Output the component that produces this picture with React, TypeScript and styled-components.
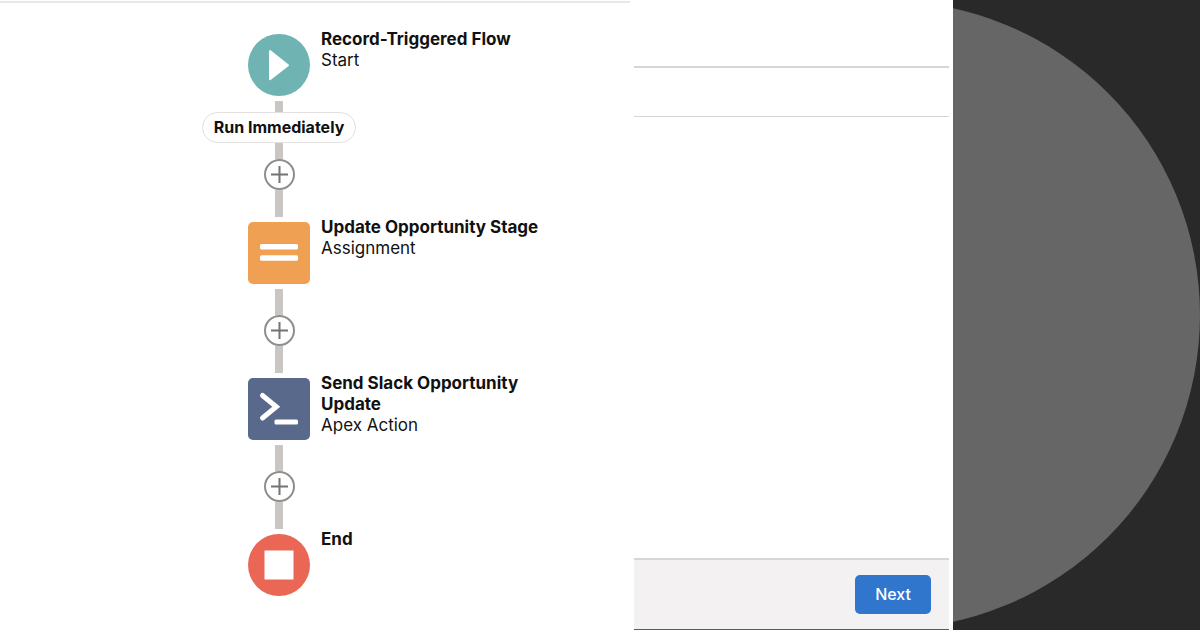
import React from "react";
import styled, { createGlobalStyle } from "styled-components";

const GlobalStyle = createGlobalStyle`
  *, *::before, *::after { box-sizing: border-box; }
  body {
    margin: 0;
    background: #fff;
    color: #111;
    font-family: Inter, "Liberation Sans", sans-serif;
    font-size: 17px;
    line-height: 21px;
  }
`;

const Page = styled.main`
  display: grid;
  grid-template-columns: 630fr 315fr 247fr;
  column-gap: 4px;
  min-height: 100vh;
`;

const FlowPanel = styled.section`
  margin-top: 1px;
  padding: 26px 24px 24px 248px;
  border-top: 2px solid #e8e8e8;
`;

const FlowList = styled.ol`
  list-style: none;
  margin: 0;
  padding: 0;
`;

const Node = styled.div`
  display: flex;
  gap: 11px;
`;

const NodeIcon = styled.svg`
  flex: none;
  width: 62px;
  height: 62px;
  margin: 5px 0;
`;

const NodeText = styled.div`
  max-width: 232px;
`;

const NodeTitle = styled.h2`
  margin: 0;
  font-size: 17px;
  font-weight: 700;
`;

const NodeType = styled.p`
  margin: 0;
  font-size: 17px;
`;

const Connector = styled.div`
  display: flex;
  flex-direction: column;
  align-items: center;
  width: 62px;
`;

const Line = styled.span<{ $length: number }>`
  width: 8px;
  height: ${(p) => p.$length}px;
  background: #c9c6c4;
`;

const PathLabel = styled.span`
  height: 31px;
  padding: 0 11px;
  border: 1px solid #e2e1e0;
  border-radius: 16px;
  background: #fff;
  font-size: 16px;
  font-weight: 700;
  line-height: 29px;
  white-space: nowrap;
`;

const AddButton = styled.button`
  display: block;
  width: 31px;
  height: 31px;
  padding: 0;
  border: 0;
  border-radius: 50%;
  background: #fff;
  cursor: pointer;

  svg {
    display: block;
  }
`;

const ScreenPanel = styled.section`
  display: flex;
  flex-direction: column;
`;

const ScreenHeader = styled.div`
  height: 68px;
  border-bottom: 2px solid #d6d6d6;
`;

const ScreenToolbar = styled.div`
  height: 49px;
  border-bottom: 1px solid #d6d6d6;
`;

const ScreenFooter = styled.footer`
  display: flex;
  justify-content: flex-end;
  margin-top: auto;
  padding: 15px 18px 15px;
  border-top: 2px solid #d6d6d6;
  border-bottom: 1px solid #5c5a5b;
  background: #f3f1f2;
`;

const NextButton = styled.button`
  height: 39px;
  padding: 0 20px;
  border: 0;
  border-radius: 5px;
  background: #2f76cc;
  color: #fff;
  font: 500 16px/39px Inter, "Liberation Sans", sans-serif;
  cursor: pointer;
`;

const Backdrop = styled.aside`
  display: flex;
  justify-content: flex-end;
  padding: 1px 0;
  overflow: hidden;
  background: #292929;
`;

const Disc = styled.div`
  flex: none;
  aspect-ratio: 1;
  border-radius: 50%;
  background: #666;
`;

type Kind = "start" | "assignment" | "action" | "end";

const glyphs: Record<Kind, React.ReactNode> = {
  start: (
    <>
      <circle cx="31" cy="31" r="31" fill="#6fb3b2" />
      <path
        d="M22 17v28.200L40 31.200z"
        fill="#fff"
        stroke="#fff"
        strokeWidth="2"
        strokeLinejoin="round"
      />
    </>
  ),
  assignment: (
    <>
      <rect width="62" height="62" rx="5" fill="#f0a053" />
      <rect x="12" y="22" width="38" height="5.500" rx="1.500" fill="#fff" />
      <rect x="12" y="33.200" width="38" height="5.500" rx="1.500" fill="#fff" />
    </>
  ),
  action: (
    <>
      <rect width="62" height="62" rx="5" fill="#58698b" />
      <path
        d="M14.500 17.500L28.300 28.800L14.500 40"
        fill="none"
        stroke="#fff"
        strokeWidth="5"
        strokeLinecap="round"
      />
      <rect x="26.500" y="41.500" width="23.500" height="5" rx="1.500" fill="#fff" />
    </>
  ),
  end: (
    <>
      <circle cx="31" cy="31" r="31" fill="#ea6756" />
      <rect x="16.500" y="16.500" width="29" height="29" fill="#fff" />
    </>
  ),
};

interface Step {
  kind: Kind;
  title: string;
  type?: string;
  path?: string;
}

const steps: Step[] = [
  { kind: "start", title: "Record-Triggered Flow", type: "Start", path: "Run Immediately" },
  { kind: "assignment", title: "Update Opportunity Stage", type: "Assignment" },
  { kind: "action", title: "Send Slack Opportunity Update", type: "Apex Action" },
  { kind: "end", title: "End" },
];

function Add({ after }: { after: string }) {
  return (
    <AddButton type="button" aria-label={`Add element after ${after}`}>
      <svg width="31" height="31" viewBox="0 0 31 31" fill="none" strokeWidth="2">
        <circle cx="15.500" cy="15.500" r="14.500" stroke="#8f8d8d" />
        <path d="M15.500 7v17M7 15.500h17" stroke="#757373" />
      </svg>
    </AddButton>
  );
}

function FlowStep({ step, last }: { step: Step; last: boolean }) {
  return (
    <li>
      <Node>
        <NodeIcon viewBox="0 0 62 62" aria-hidden="true">
          {glyphs[step.kind]}
        </NodeIcon>
        <NodeText>
          <NodeTitle>{step.title}</NodeTitle>
          {step.type && <NodeType>{step.type}</NodeType>}
        </NodeText>
      </Node>
      {!last && (
        <Connector>
          {step.path && (
            <>
              <Line $length={11} />
              <PathLabel>{step.path}</PathLabel>
            </>
          )}
          <Line $length={step.path ? 16 : 26} />
          <Add after={step.title} />
          <Line $length={27} />
        </Connector>
      )}
    </li>
  );
}

export default function App() {
  return (
    <>
      <GlobalStyle />
      <Page>
        <FlowPanel>
          <FlowList>
            {steps.map((step, i) => (
              <FlowStep key={step.kind} step={step} last={i === steps.length - 1} />
            ))}
          </FlowList>
        </FlowPanel>
        <ScreenPanel>
          <ScreenHeader />
          <ScreenToolbar />
          <ScreenFooter>
            <NextButton type="button">Next</NextButton>
          </ScreenFooter>
        </ScreenPanel>
        <Backdrop>
          <Disc />
        </Backdrop>
      </Page>
    </>
  );
}
